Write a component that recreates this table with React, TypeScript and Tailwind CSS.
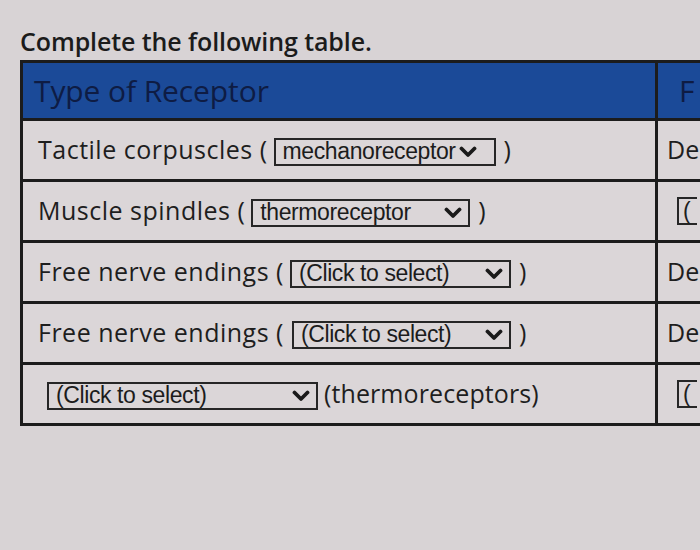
import React from 'react';

// ── Chevron ───────────────────────────────────────────────────────────────────
const Chevron = () => (
    <svg width="18" height="12" viewBox="0 0 18 12" className="shrink-0">
        <path d="M2.5 2.5 L9 9 L15.5 2.5" fill="none" stroke="#1a1a1a" strokeWidth="3.8" strokeLinecap="round" strokeLinejoin="round" />
    </svg>
);

// ── Dropdown ──────────────────────────────────────────────────────────────────
const Dropdown = ({ value, width, gap }: { value: string; width: string; gap?: string }) => (
    <span
        className={`inline-flex items-center h-[28px] border-2 border-[#262626] pl-[7px] pr-[6px] ${width}`}
        style={{ fontFamily: '"Liberation Sans", Arial, sans-serif' }}
    >
        <span className="text-[23px] leading-none text-[#1c1c1c] tracking-[-0.4px]">{value}</span>
        <span className={gap ?? 'flex-1'} />
        <Chevron />
    </span>
);

// ── Row ───────────────────────────────────────────────────────────────────────
const Row = ({ children, right }: { children: React.ReactNode; right: React.ReactNode }) => (
    <div className="flex h-[61px] border-t-[3px] border-[#1c1c1c] bg-[#dbd6d8]">
        <div className="w-[635px] shrink-0 border-r-[3px] border-[#1c1c1c] flex items-center pl-[15px] text-[25px] tracking-[0.5px] text-[#1e1e1e]">
            {children}
        </div>
        <div className="flex-1 flex items-center pl-[9px] text-[25px] whitespace-nowrap text-[#1e1e1e]">{right}</div>
    </div>
);

const BoxCut = () => (
    <span
        className="inline-flex items-center h-[28px] ml-[10px] border-2 border-r-0 border-[#262626] pl-[4px] w-[20px] text-[23px]"
        style={{ fontFamily: '"Liberation Sans", Arial, sans-serif' }}
    >
        (
    </span>
);

export default function App() {
    return (
        <div
            className="w-[700px] h-[550px] overflow-hidden bg-[#d8d3d5] pl-[20px] pt-[25px]"
            style={{ fontFamily: '"Open Sans", Lato, sans-serif' }}
        >
            <div className="text-[25px] leading-[32px] font-semibold text-[#1b1b1b] mb-[3px] whitespace-nowrap tracking-[-0.1px]">
                Complete the following table.
            </div>
            <div className="w-[680px] border-[3px] border-b-0 border-r-0 border-[#1c1c1c]">
                <div className="flex h-[55px] bg-[#1b4a98]">
                    <div className="w-[635px] shrink-0 border-r-[3px] border-[#1c1c1c] flex items-center pl-[11px] text-[30px] tracking-[-0.1px] text-[#0e1c44]">
                        Type of Receptor
                    </div>
                    <div className="flex-1 flex items-center pl-[21px] text-[30px] text-[#0e1c44]">F</div>
                </div>
                <Row right="De">
                    <span className="whitespace-nowrap">Tactile corpuscles (</span>
                    <span className="ml-[6px]"><Dropdown value="mechanoreceptor" width="w-[222px]" gap="w-[3px]" /></span>
                    <span className="ml-[8px]">)</span>
                </Row>
                <Row right={<BoxCut />}>
                    <span className="whitespace-nowrap">Muscle spindles (</span>
                    <span className="ml-[6px]"><Dropdown value="thermoreceptor" width="w-[219px]" /></span>
                    <span className="ml-[8px]">)</span>
                </Row>
                <Row right="De">
                    <span className="whitespace-nowrap">Free nerve endings (</span>
                    <span className="ml-[6px]"><Dropdown value="(Click to select)" width="w-[221px]" /></span>
                    <span className="ml-[8px]">)</span>
                </Row>
                <Row right="De">
                    <span className="whitespace-nowrap">Free nerve endings (</span>
                    <span className="ml-[8px]"><Dropdown value="(Click to select)" width="w-[219px]" /></span>
                    <span className="ml-[8px]">)</span>
                </Row>
                <Row right={<BoxCut />}>
                    <span className="ml-[9px]"><Dropdown value="(Click to select)" width="w-[271px]" /></span>
                    <span className="ml-[6px] whitespace-nowrap tracking-[0.1px]">(thermoreceptors)</span>
                </Row>
                <div className="h-[3px] bg-[#1c1c1c]" />
            </div>
        </div>
    );
}
